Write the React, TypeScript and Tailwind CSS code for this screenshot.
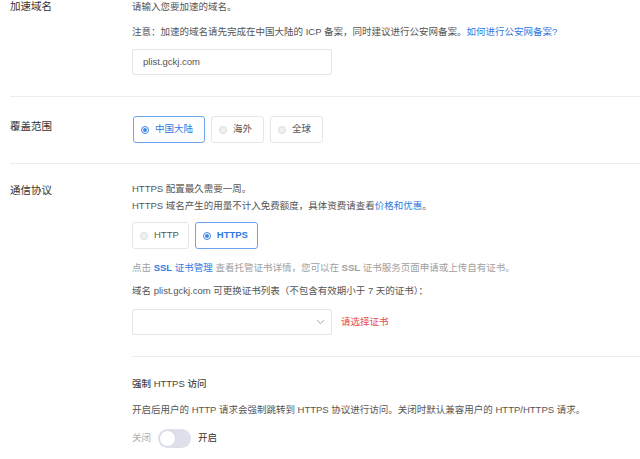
import React from "react";

function Radio({ checked }: { checked?: boolean }) {
  return checked ? (
    <span className="box-border flex h-[8px] w-[8px] items-center justify-center rounded-full border border-[#3d86e6] bg-white">
      <span className="h-[4px] w-[4px] rounded-full bg-[#3d86e6]" />
    </span>
  ) : (
    <span className="box-border h-[8px] w-[8px] rounded-full border border-[#dcdcdc] bg-[#eef0f2]" />
  );
}

function RadioBox({ label, checked, bold, wide }: { label: string; checked?: boolean; bold?: boolean; wide?: boolean }) {
  const pad = wide ? " pl-[7px] pr-[11px]" : " pl-[7px] pr-[9px]";
  return (
    <div
      className={
        (checked
          ? "box-border flex h-[27px] items-center gap-[6px] rounded-[3px] border border-[#6aa5ee] text-[#2f7ae0]"
          : "box-border flex h-[27px] items-center gap-[6px] rounded-[3px] border border-[#e6e6e6] text-[#555]") + pad
      }
    >
      <Radio checked={checked} />
      <span className={bold ? "font-semibold" : ""}>{label}</span>
    </div>
  );
}

export default function App() {
  return (
    <div className="h-[459px] w-[640px] overflow-hidden bg-white font-['Liberation_Sans','Noto_Sans_CJK_SC',sans-serif] text-[9.5px] text-[#555]">
      {/* Section 1 */}
      <div className="ml-[10px] flex border-b border-[#ececec] pb-[21px]">
        <div className="w-[122px] shrink-0 text-[10.5px] leading-[13px] text-[#333]">加速域名</div>
        <div className="flex flex-col">
          <div className="leading-[13px]">请输入您要加速的域名。</div>
          <div className="mt-[11.5px] leading-[13px]">
            注意：加速的域名请先完成在中国大陆的 ICP 备案，同时建议进行公安网备案。
            <span className="text-[#2f7ae0]">如何进行公安网备案?</span>
          </div>
          <div className="mt-[11.5px] box-border flex h-[26px] w-[200px] items-center rounded-[3px] border border-[#e3e3e3] pl-[10px] text-[#555]">
            plist.gckj.com
          </div>
        </div>
      </div>

      {/* Section 2 */}
      <div className="ml-[10px] flex border-b border-[#ececec] pb-[20px] pt-[19px]">
        <div className="mt-[4px] w-[122px] shrink-0 text-[10.5px] leading-[13px] text-[#333]">覆盖范围</div>
        <div className="flex gap-[6px] pl-[1px]">
          <RadioBox label="中国大陆" checked wide />
          <RadioBox label="海外" wide />
          <RadioBox label="全球" wide />
        </div>
      </div>

      {/* Section 3 */}
      <div className="ml-[10px] flex pt-[15.5px]">
        <div className="mt-[4px] w-[122px] shrink-0 text-[10.5px] leading-[13px] text-[#333]">通信协议</div>
        <div className="flex flex-1 flex-col">
          <div className="leading-[17px]">HTTPS 配置最久需要一周。</div>
          <div className="leading-[17px]">
            HTTPS 域名产生的用量不计入免费额度，具体资费请查看<span className="text-[#2f7ae0]">价格和优惠</span>。
          </div>
          <div className="mt-[8.5px] flex gap-[6px]">
            <RadioBox label="HTTP" />
            <RadioBox label="HTTPS" checked bold />
          </div>
          <div className="mt-[11.5px] leading-[13px] text-[#a0a0a0]">
            点击 <span className="font-semibold text-[#2f7ae0]">SSL</span>{" "}
            <span className="text-[#2f7ae0]">证书管理</span> 查看托管证书详情，您可以在{" "}
            <span className="font-semibold">SSL</span> 证书服务页面申请或上传自有证书。
          </div>
          <div className="mt-[10px] leading-[13px]">
            域名 plist.gckj.com 可更换证书列表（不包含有效期小于 7 天的证书）：
          </div>
          <div className="mt-[12.5px] flex items-center gap-[9px]">
            <div className="box-border flex h-[26px] w-[200px] items-center justify-end rounded-[3px] border border-[#e3e3e3] pr-[6px]">
              <svg width="9" height="6" viewBox="0 0 9 6" fill="none">
                <path d="M1 1.2 L4.5 4.6 L8 1.2" stroke="#a8a8a8" strokeWidth="1" />
              </svg>
            </div>
            <span className="text-[#e84a4a]">请选择证书</span>
          </div>
          <div className="mt-[21px] border-t border-[#ececec]" />
          <div className="mt-[19.5px] font-medium leading-[13px] text-[#444]">强制 HTTPS 访问</div>
          <div className="mt-[13px] leading-[13px]">
            开启后用户的 HTTP 请求会强制跳转到 HTTPS 协议进行访问。关闭时默认兼容用户的 HTTP/HTTPS 请求。
          </div>
          <div className="mt-[13.5px] flex items-center">
            <span className="text-[#b0b0b0]">关闭</span>
            <div className="ml-[7px] box-border flex h-[19px] w-[33px] items-center rounded-full bg-[#dde0ea] p-[1px]">
              <span className="box-border h-[17px] w-[17px] rounded-full border border-[#d6d9e2] bg-white" />
            </div>
            <span className="ml-[7px] text-[#333]">开启</span>
          </div>
        </div>
      </div>
    </div>
  );
}
